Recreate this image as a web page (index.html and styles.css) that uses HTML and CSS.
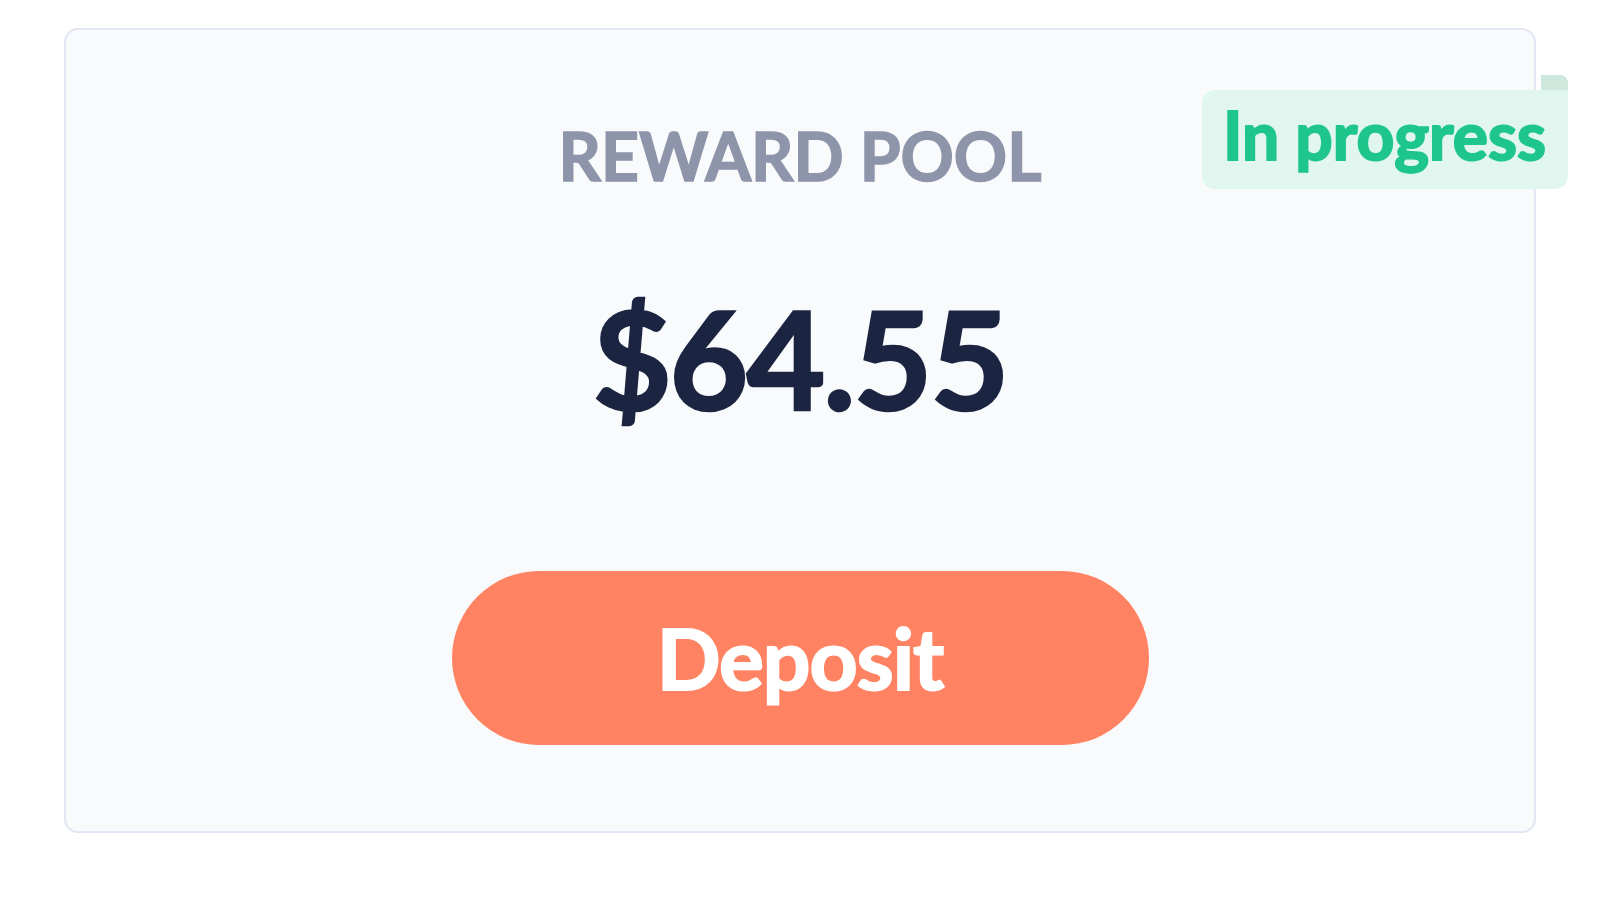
FILE: index.html
```html
<!DOCTYPE html>
<html lang="en">
<head>
<meta charset="utf-8">
<title>Reward pool</title>
<link rel="stylesheet" href="styles.css">
</head>
<body>
<section class="pool-card">
  <div class="status">
    <span class="status-tab"></span>
    <span class="status-label">In progress</span>
  </div>
  <h2 class="pool-title">REWARD POOL</h2>
  <p class="pool-amount">$64.55</p>
  <button class="deposit-btn" type="button">Deposit</button>
</section>
</body>
</html>
```
FILE: styles.css
```css
html, body {
  margin: 0;
  background: #ffffff;
}
body {
  padding: 28px 64px;
  font-family: Lato, "Open Sans", "Liberation Sans", sans-serif;
}
.pool-card {
  position: relative;
  box-sizing: border-box;
  height: 805px;
  background: #f9fafc;
  border: 2px solid #e3e6f4;
  border-radius: 14px;
  padding-top: 93px;
  display: flex;
  flex-direction: column;
  align-items: center;
}
.pool-title {
  margin: 0;
  font-size: 66px;
  line-height: 1;
  font-weight: 700;
  letter-spacing: 0;
  -webkit-text-stroke: 1.5px #8e95aa;
  color: #8e95aa;
}
.pool-amount {
  margin: 101px 0 0;
  font-size: 136px;
  line-height: 1;
  font-weight: 700;
  letter-spacing: -2px;
  -webkit-text-stroke: 2.5px #1b2440;
  color: #1b2440;
}
.deposit-btn {
  margin-top: 145px;
  width: 697px;
  height: 174px;
  border: 0;
  border-radius: 87px;
  background: #ff8262;
  color: #ffffff;
  font-family: inherit;
  font-size: 84px;
  line-height: 1;
  font-weight: 700;
  letter-spacing: -1px;
  -webkit-text-stroke: 2px #ffffff;
  padding: 0;
  display: flex;
  align-items: center;
  justify-content: center;
}
.status {
  position: absolute;
  top: 60px;
  right: -34px;
}
.status-tab {
  position: absolute;
  top: -15px;
  right: 0;
  width: 27px;
  height: 20px;
  background: #cfe8de;
  border-radius: 0 8px 0 0;
}
.status-label {
  position: relative;
  display: block;
  box-sizing: border-box;
  width: 366px;
  height: 99px;
  padding-left: 21px;
  background: #e0f6ee;
  border-radius: 13px 0 13px 13px;
  color: #1ec68c;
  font-size: 66px;
  line-height: 90px;
  font-weight: 700;
  letter-spacing: 0;
  -webkit-text-stroke: 2px #1ec68c;
}
```
